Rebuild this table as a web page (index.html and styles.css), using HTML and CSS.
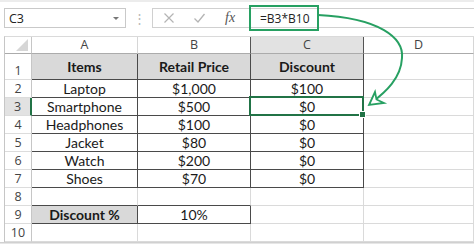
FILE: index.html
```html
<!DOCTYPE html>
<html>
<head>
<meta charset="utf-8">
<link rel="stylesheet" href="styles.css">
</head>
<body>
<div class="app">
  <div class="topline"></div>
  <div class="fbar">
    <div class="namebox"><span class="ref">C3</span><span class="dd"></span></div>
    <div class="dots">⋮</div>
    <div class="finput">
      <svg class="ico" width="12" height="12" viewBox="0 0 12 12"><path d="M1.5 1.5 L10.5 10.5 M10.5 1.5 L1.5 10.5" stroke="#b4b4b4" stroke-width="1.2" fill="none"/></svg>
      <svg class="ico ok" width="13" height="12" viewBox="0 0 13 12"><path d="M1.5 6.5 L5 10 L11.5 2" stroke="#b4b4b4" stroke-width="1.3" fill="none"/></svg>
      <span class="fx">fx</span>
      <span class="formula">=B3*B10</span>
    </div>
  </div>
  <div class="gap"></div>
  <div class="sheet">
    <div class="corner"><svg width="12" height="12" viewBox="0 0 12 12"><path d="M12 0 L12 12 L0 12 Z" fill="#d6d6d6"/></svg></div>
    <div class="ch">A</div>
    <div class="ch">B</div>
    <div class="ch sel">C</div>
    <div class="ch">D</div>

    <div class="rh">1</div>
    <div class="cell tb hd">Items</div>
    <div class="cell tb hd">Retail Price</div>
    <div class="cell tb hd">Discount</div>
    <div class="cell"></div>

    <div class="rh">2</div>
    <div class="cell tb">Laptop</div>
    <div class="cell tb">$1,000</div>
    <div class="cell tb">$100</div>
    <div class="cell"></div>

    <div class="rh rsel">3</div>
    <div class="cell tb">Smartphone</div>
    <div class="cell tb">$500</div>
    <div class="cell tb active">$0</div>
    <div class="cell"></div>

    <div class="rh">4</div>
    <div class="cell tb">Headphones</div>
    <div class="cell tb">$100</div>
    <div class="cell tb">$0</div>
    <div class="cell"></div>

    <div class="rh">5</div>
    <div class="cell tb">Jacket</div>
    <div class="cell tb">$80</div>
    <div class="cell tb">$0</div>
    <div class="cell"></div>

    <div class="rh">6</div>
    <div class="cell tb">Watch</div>
    <div class="cell tb">$200</div>
    <div class="cell tb">$0</div>
    <div class="cell"></div>

    <div class="rh">7</div>
    <div class="cell tb">Shoes</div>
    <div class="cell tb">$70</div>
    <div class="cell tb">$0</div>
    <div class="cell"></div>

    <div class="rh">8</div>
    <div class="cell db"></div>
    <div class="cell db"></div>
    <div class="cell"></div>
    <div class="cell"></div>

    <div class="rh">9</div>
    <div class="cell tb hd">Discount %</div>
    <div class="cell tb">10%</div>
    <div class="cell"></div>
    <div class="cell"></div>

    <div class="rh">10</div>
    <div class="cell"></div>
    <div class="cell"></div>
    <div class="cell"></div>
    <div class="cell"></div>
  </div>
  <div class="scroll"></div>

  <div class="callout"></div>
  <svg class="arrow" width="474" height="244" viewBox="0 0 474 244">
    <path d="M318 15 C380 18 404 38 402 58 C401 78 386 92 371 103" stroke="#27a062" stroke-width="2" fill="none"/>
    <path d="M375 92 L369 105 L384 103 L376.5 99.5 Z" stroke="#27a062" stroke-width="1.8" fill="#fff" stroke-linejoin="miter"/>
  </svg>
</div>
</body>
</html>
```

FILE: styles.css
```css
* { box-sizing: border-box; }
html, body { margin: 0; padding: 0; background: #fff; }
.app {
  position: relative;
  width: 474px;
  height: 244px;
  overflow: hidden;
  background: #fff;
  font-family: "Lato", "Open Sans", sans-serif;
}
.topline { height: 2px; background: #ececec; margin-bottom: 6px; }
.fbar {
  display: flex;
  align-items: stretch;
  height: 20px;
  font-family: "Open Sans", "Noto Sans", sans-serif;
}
.namebox {
  margin-left: 4px;
  width: 122px;
  border: 1px solid #c9c9c9;
  display: flex;
  align-items: center;
  justify-content: space-between;
  padding: 0 6px 0 4px;
  font-size: 12.5px;
  color: #222;
}
.dd {
  width: 0; height: 0;
  border-left: 3px solid transparent;
  border-right: 3px solid transparent;
  border-top: 3px solid #777;
}
.dots {
  width: 26px;
  text-align: center;
  color: #b8b8b8;
  font-size: 13px;
  line-height: 20px;
}
.finput {
  flex: 1;
  border: 1px solid #d0d0d0;
  border-right: none;
  display: flex;
  align-items: center;
  padding-left: 10px;
}
.ico { margin-right: 18px; }
.ok { margin-right: 19px; }
.fx {
  font-family: "Liberation Serif", serif;
  font-style: italic;
  font-size: 14px;
  color: #555;
  width: 20px;
  margin-right: 13px;
}
.formula { font-size: 12px; color: #222; padding-left: 2px; }
.gap { height: 8px; }
.sheet {
  display: grid;
  margin-left: 4px;
  grid-template-columns: 27px 106px 113px 113px 1fr;
  grid-template-rows: 17px 26px repeat(9, 18px);
  border-left: 1px solid #c6c6c6;
  border-top: 1px solid #dadada;
}
.corner {
  border-right: 1px solid #c6c6c6;
  border-bottom: 1px solid #ababab;
  display: flex;
  align-items: flex-end;
  justify-content: flex-end;
  padding: 0 3px 2px 0;
}
.ch {
  border-right: 1px solid #d6d6d6;
  border-bottom: 1px solid #ababab;
  text-align: center;
  font-family: "Open Sans", sans-serif;
  font-size: 12.5px;
  line-height: 16px;
  color: #444;
}
.ch.sel { background: #e2e2e2; border-right-color: #555; border-left: 1px solid #555; margin-left: -1px; }
.rh {
  border-right: 1px solid #c6c6c6;
  border-bottom: 1px solid #dcdcdc;
  display: flex;
  align-items: flex-end;
  justify-content: center;
  font-family: "Open Sans", sans-serif;
  font-size: 12.5px;
  line-height: 17px;
  color: #444;
}
.rh.rsel { background: #e2e2e2; border-right: 2px solid #217346; }
.cell {
  border-right: 1px solid #dadada;
  border-bottom: 1px solid #dadada;
  display: flex;
  align-items: center;
  justify-content: center;
  font-size: 14px;
  color: #1a1a1a;
  line-height: 17px;
}
.cell.tb { border-right-color: #4a4a4a; border-bottom-color: #4a4a4a; }
.cell.db { border-bottom-color: #4a4a4a; }
.cell.hd { background: #d9d9d9; font-weight: bold; }
.active { position: relative; }
.active::after {
  content: "";
  position: absolute;
  left: -2px; top: -2px; right: -1px; bottom: -1px;
  border: 2px solid #217346;
}
.active::before {
  content: "";
  position: absolute;
  right: -3px; bottom: -3px;
  width: 5px; height: 5px;
  background: #217346;
  border: 1px solid #fff;
  z-index: 2;
}
.scroll { height: 4px; background: #e6e6e6; border-top: 1px solid #d0d0d0; }
.callout {
  position: absolute;
  left: 249px; top: 5px;
  width: 70px; height: 26px;
  border: 2px solid #27a062;
}
.arrow { position: absolute; left: 0; top: 0; pointer-events: none; }
```
